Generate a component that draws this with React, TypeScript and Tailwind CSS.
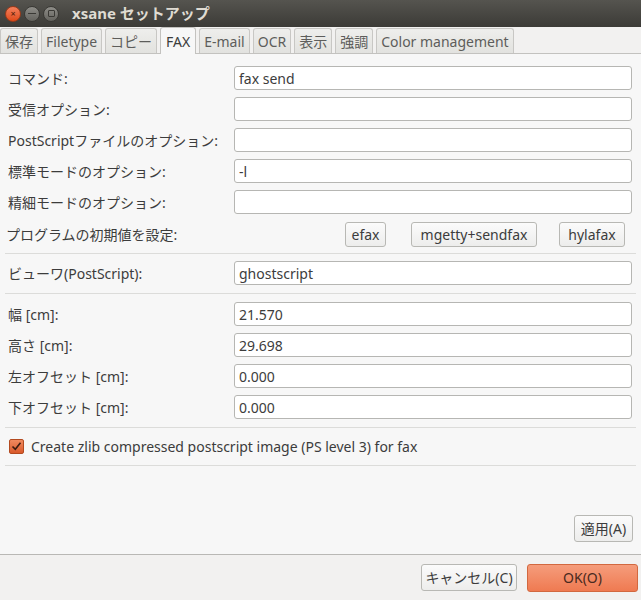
import React from "react";

const font = { fontFamily: '"Noto Sans", "Noto Sans CJK JP", sans-serif' };

const tabs = ["保存", "Filetype", "コピー", "FAX", "E-mail", "OCR", "表示", "強調", "Color management"];

function Field({ label, value }: { label: string; value?: string }) {
  return (
    <div className="flex items-center h-[24px]">
      <div className="w-[234px] shrink-0 pl-[8px] text-[14px] text-[#3c3c3c]">{label}</div>
      <div className="w-[398px] h-[24px] bg-white border border-[#b6b6b3] rounded-[3px] px-[4px] flex items-center text-[14px] text-[#3c3c3c]">
        {value}
      </div>
    </div>
  );
}

function Btn({ children, className = "" }: { children: React.ReactNode; className?: string }) {
  return (
    <div
      className={
        "flex items-center justify-center border border-[#b8b8b4] rounded-[3px] bg-gradient-to-b from-[#fbfbfb] to-[#ededec] text-[14px] text-[#3c3c3c] " +
        className
      }
    >
      {children}
    </div>
  );
}

export default function App() {
  return (
    <div className="w-[641px] h-[600px] flex flex-col bg-[#f2f1f0] overflow-hidden" style={font}>
      {/* title bar */}
      <div className="h-[27px] shrink-0 flex items-center bg-gradient-to-b from-[#55544f] to-[#3c3b37]">
        <div className="flex items-center gap-[3px] pl-[5px]">
          <div className="w-[16px] h-[16px] rounded-full bg-gradient-to-b from-[#f37f5a] to-[#df4a16] border border-[#9b3a1a] flex items-center justify-center text-[9px] leading-none text-[#4a1a08]">
            ×
          </div>
          <div className="w-[16px] h-[16px] rounded-full bg-gradient-to-b from-[#8e8d88] to-[#64635e] border border-[#3a3935] flex items-center justify-center">
            <div className="w-[8px] h-[1.5px] bg-[#3a3935]" />
          </div>
          <div className="w-[16px] h-[16px] rounded-full bg-gradient-to-b from-[#8e8d88] to-[#64635e] border border-[#3a3935] flex items-center justify-center">
            <div className="w-[7px] h-[7px] border border-[#3a3935] rounded-[1px]" />
          </div>
        </div>
        <div className="ml-[13px] text-[15px] font-bold text-[#dfdbd2]">xsane セットアップ</div>
      </div>

      {/* tabs */}
      <div className="h-[27px] shrink-0 flex items-end gap-[3px] border-b border-[#c3c2bf]">
        {tabs.map((t) => (
          <div
            key={t}
            className={
              t === "FAX"
                ? "h-[27px] px-[5px] flex items-center bg-[#f7f7f7] border border-b-0 border-[#c3c2bf] rounded-t-[3px] -mb-[1px] text-[14px] text-[#3c3c3c]"
                : "h-[25px] px-[4px] flex items-center bg-gradient-to-b from-[#eeeeec] to-[#e2e2df] border border-b-0 border-[#c8c7c4] rounded-t-[3px] text-[14px] text-[#5d5d5b]"
            }
          >
            {t}
          </div>
        ))}
      </div>

      {/* notebook page */}
      <div className="flex-1 flex flex-col bg-[#f7f7f7] pt-[12px]">
        <div className="flex flex-col gap-[7px]">
          <Field label="コマンド:" value="fax send" />
          <Field label="受信オプション:" />
          <Field label="PostScriptファイルのオプション:" />
          <Field label="標準モードのオプション:" value="-l" />
          <Field label="精細モードのオプション:" />
        </div>
        <div className="flex items-center h-[24px] mt-[8px]">
          <div className="flex-1 pl-[6px] text-[14px] text-[#3c3c3c]">プログラムの初期値を設定:</div>
          <Btn className="w-[41px] h-[25px]">efax</Btn>
          <Btn className="w-[126px] h-[25px] ml-[25px]">mgetty+sendfax</Btn>
          <Btn className="w-[66px] h-[25px] ml-[22px] mr-[16px]">hylafax</Btn>
        </div>
        <div className="mx-[5px] my-[7px] border-t border-[#dcdcda]" />
        <Field label="ビューワ(PostScript):" value="ghostscript" />
        <div className="mx-[5px] mt-[8px] mb-[8px] border-t border-[#dcdcda]" />
        <div className="flex flex-col gap-[7px]">
          <Field label="幅 [cm]:" value="21.570" />
          <Field label="高さ [cm]:" value="29.698" />
          <Field label="左オフセット [cm]:" value="0.000" />
          <Field label="下オフセット [cm]:" value="0.000" />
        </div>
        <div className="mx-[5px] mt-[8px] border-t border-[#dcdcda]" />
        <div className="flex items-center h-[37px] pl-[9px]">
          <div className="w-[15px] h-[15px] rounded-[2px] bg-gradient-to-b from-[#f08a5f] to-[#d9592a] border border-[#b34a20] flex items-center justify-center">
            <svg width="11" height="11" viewBox="0 0 11 11">
              <path d="M1.5 5.5 L4.3 8.3 L9.5 1.8" fill="none" stroke="#3a1c10" strokeWidth="1.6" />
            </svg>
          </div>
          <div className="ml-[7px] text-[14px] text-[#3c3c3c]">Create zlib compressed postscript image (PS level 3) for fax</div>
        </div>
        <div className="mx-[5px] border-t border-[#dcdcda]" />
        <div className="flex-1 flex items-end justify-end pr-[8px] pb-[12px]">
          <Btn className="w-[59px] h-[27px]">適用(A)</Btn>
        </div>
      </div>

      {/* action area */}
      <div className="h-[46px] shrink-0 flex items-center justify-end gap-[10px] pr-[3px] border-t border-[#b9b8b5] bg-[#f2f1f0]">
        <Btn className="w-[96px] h-[27px]">キャンセル(C)</Btn>
        <div className="w-[111px] h-[28px] flex items-center justify-center rounded-[3px] border border-[#d2683f] bg-gradient-to-b from-[#f59c7b] to-[#ef7a51] text-[14px] text-[#4a2a1e]">
          OK(O)
        </div>
      </div>
    </div>
  );
}
